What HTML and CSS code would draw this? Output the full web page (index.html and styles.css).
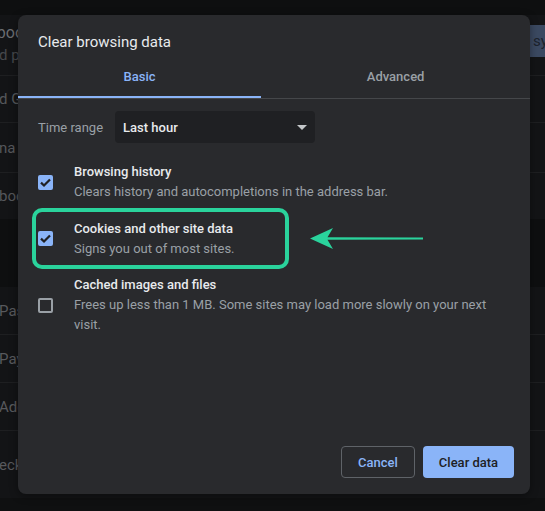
FILE: index.html
```html
<!DOCTYPE html>
<html lang="en">
<head>
<meta charset="utf-8">
<title>Clear browsing data</title>
<link rel="stylesheet" href="styles.css">
</head>
<body>
<div class="page">
  <div class="strip-top"></div>
  <div class="row row-first">
    <div class="row-text">
      <div class="row-title">Fboook</div>
      <div class="row-sub">d p</div>
    </div>
    <div class="chip">sy</div>
  </div>
  <div class="row row-b"><div class="row-label">d G</div></div>
  <div class="row row-c"><div class="row-label">na</div></div>
  <div class="row row-d"><div class="row-label">boo</div></div>
  <div class="gap-block"></div>
  <div class="row row-e"><div class="row-label">Pass</div></div>
  <div class="row row-e"><div class="row-label">Paym</div></div>
  <div class="row row-e"><div class="row-label">Add</div></div>
  <div class="row row-last"><div class="row-label">eck</div></div>
</div>

<div class="dialog">
  <div class="dialog-title">Clear browsing data</div>
  <div class="tabs">
    <div class="tab active">Basic</div>
    <div class="tab">Advanced</div>
  </div>
  <div class="dialog-body">
    <div class="range">
      <span class="range-label">Time range</span>
      <div class="select">
        <span>Last hour</span>
        <span class="caret"></span>
      </div>
    </div>
    <div class="options">
      <div class="option">
        <span class="checkbox checked"><svg viewBox="0 0 16 16" width="16" height="16"><path d="M3.2 8.2 L6.4 11.2 L12.8 4.8" fill="none" stroke="#202124" stroke-width="2.4"/></svg></span>
        <div class="option-text">
          <div class="option-title">Browsing history</div>
          <div class="option-sub">Clears history and autocompletions in the address bar.</div>
        </div>
      </div>
      <div class="option option-marked">
        <span class="checkbox checked"><svg viewBox="0 0 16 16" width="16" height="16"><path d="M3.2 8.2 L6.4 11.2 L12.8 4.8" fill="none" stroke="#202124" stroke-width="2.4"/></svg></span>
        <div class="option-text">
          <div class="option-title">Cookies and other site data</div>
          <div class="option-sub">Signs you out of most sites.</div>
        </div>
        <span class="highlight"></span>
        <svg class="arrow" width="120" height="30" viewBox="0 0 120 30"><polygon points="0,12.5 23,2 17.5,11.2 113,11.6 113,13.6 17.5,13.8 23,23" fill="#2ad39c"/></svg>
      </div>
      <div class="option">
        <span class="checkbox"></span>
        <div class="option-text">
          <div class="option-title">Cached images and files</div>
          <div class="option-sub">Frees up less than 1 MB. Some sites may load more slowly on your next visit.</div>
        </div>
      </div>
    </div>
  </div>
  <div class="actions">
    <button class="btn btn-cancel">Cancel</button>
    <button class="btn btn-primary">Clear data</button>
  </div>
</div>
</body>
</html>
```
FILE: styles.css
```css
html, body {
  margin: 0;
  padding: 0;
  height: 511px;
  overflow: hidden;
  background: #0f1011;
  font-family: Roboto, "Liberation Sans", sans-serif;
}

.page {
  display: flex;
  flex-direction: column;
  width: 545px;
}

.strip-top {
  height: 15px;
  background: #0e0f10;
}

.row {
  display: flex;
  align-items: center;
  background: #131416;
  border-bottom: 1px solid #1e1f21;
  color: #55575b;
  font-size: 15px;
  white-space: nowrap;
  overflow: hidden;
}

.row-first {
  height: 60px;
  align-items: flex-start;
}

.row-text {
  padding-top: 7px;
  margin-left: -12px;
}

.row-title {
  color: #6b6d71;
  font-size: 16px;
  line-height: 22px;
}

.row-sub {
  color: #45474b;
  font-size: 15px;
  line-height: 22px;
  padding-left: 11px;
}

.chip {
  margin-left: auto;
  margin-top: 10px;
  width: 12px;
  height: 32px;
  line-height: 32px;
  padding-left: 3px;
  background: #3b4961;
  color: #1c222c;
  font-size: 15px;
  overflow: hidden;
}

.row-label {
  margin-left: -1px;
}

.row-b { height: 46px; }
.row-c { height: 49px; }
.row-d { height: 46px; border-bottom: none; }
.row-e { height: 47px; color: #58595d; }

.gap-block {
  height: 68px;
  background: #0e0f10;
}

.row-last {
  height: 67px;
  color: #58595d;
  border-bottom: none;
}

/* Dialog */
.dialog {
  position: absolute;
  left: 18px;
  top: 15px;
  width: 512px;
  height: 479px;
  background: #292a2d;
  border-radius: 8px;
  display: flex;
  flex-direction: column;
  box-shadow: 0 2px 8px rgba(0, 0, 0, 0.4);
}

.dialog-title {
  padding: 17px 20px 6px;
  font-size: 15px;
  line-height: 20px;
  color: #e8eaed;
}

.tabs {
  display: flex;
  border-bottom: 1px solid #45474a;
}

.tab {
  flex: 1 1 auto;
  height: 38px;
  line-height: 38px;
  text-align: center;
  font-size: 13px;
  font-weight: 500;
  color: #9aa0a6;
  border-bottom: 2px solid transparent;
}

.tab.active {
  color: #8ab4f8;
  border-bottom-color: #8ab4f8;
}

.dialog-body {
  flex: 1;
  padding: 12px 20px 0;
}

.range {
  display: flex;
  align-items: center;
  gap: 12px;
}

.range-label {
  font-size: 13px;
  color: #9aa0a6;
  white-space: nowrap;
}

.select {
  width: 200px;
  height: 32px;
  box-sizing: border-box;
  display: flex;
  align-items: center;
  justify-content: space-between;
  padding: 0 8px;
  background: #1f2023;
  border-radius: 4px;
  font-size: 13px;
  font-weight: 500;
  color: #e8eaed;
}

.caret {
  width: 0;
  height: 0;
  border-left: 5px solid transparent;
  border-right: 5px solid transparent;
  border-top: 5px solid #c4c7ca;
}

.options {
  display: flex;
  flex-direction: column;
  gap: 16.5px;
  margin-top: 19px;
}

.option {
  display: flex;
  align-items: center;
  gap: 21px;
  position: relative;
}

.checkbox {
  flex: none;
  width: 15px;
  height: 15px;
  box-sizing: border-box;
  border: 2px solid #9aa0a6;
  border-radius: 2px;
  display: flex;
  align-items: center;
  justify-content: center;
}

.checkbox.checked {
  background: #8ab4f8;
  border-color: #8ab4f8;
}

.checkbox svg {
  flex: none;
  width: 15px;
  height: 15px;
}

.option-text {
  font-size: 13px;
  line-height: 20px;
}

.option-title {
  color: #e8eaed;
  font-weight: 500;
}

.option-sub {
  color: #9aa0a6;
  width: 420px;
}

.highlight {
  position: absolute;
  left: -6px;
  top: -11px;
  width: 257px;
  height: 61px;
  box-sizing: border-box;
  border: 4px solid #2ad39c;
  border-radius: 10px;
}

.arrow {
  position: absolute;
  left: 272px;
  top: 7px;
}

.actions {
  display: flex;
  justify-content: flex-end;
  gap: 8px;
  padding: 0 16px 16px;
}

.btn {
  height: 32px;
  box-sizing: border-box;
  border-radius: 4px;
  font-family: Roboto, "Liberation Sans", sans-serif;
  font-size: 13px;
  font-weight: 500;
  cursor: pointer;
}

.btn-cancel {
  width: 74px;
  background: transparent;
  border: 1px solid #5f6368;
  color: #8ab4f8;
}

.btn-primary {
  width: 91px;
  background: #8ab4f8;
  border: none;
  color: #202124;
}
```
